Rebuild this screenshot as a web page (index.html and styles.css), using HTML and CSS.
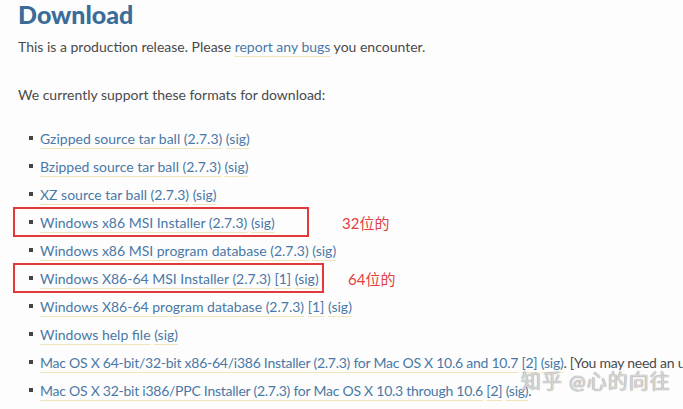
FILE: index.html
```html
<!DOCTYPE html>
<html lang="en">
<head>
    <meta charset="UTF-8">
    <meta name="viewport" content="width=device-width, initial-scale=1.0">
    <title>Download</title>
    <link rel="stylesheet" href="styles.css">
</head>
<body>

    <div class="page">
        <h1>Download</h1>
        <p>This is a production release. Please <a href="#">report any bugs</a> you encounter.</p>
        <p class="intro">We currently support these formats for download:</p>

        <ul class="files">
            <li><span class="dot"></span><a href="#">Gzipped source tar ball (2.7.3)</a>&nbsp;<a href="#">(sig)</a></li>
            <li><span class="dot"></span><a href="#">Bzipped source tar ball (2.7.3)</a>&nbsp;<a href="#">(sig)</a></li>
            <li><span class="dot"></span><a href="#">XZ source tar ball (2.7.3)</a>&nbsp;<a href="#">(sig)</a></li>
            <li class="marked">
                <div class="box box-32"><span class="dot"></span><a href="#">Windows x86 MSI Installer (2.7.3)</a>&nbsp;<a href="#">(sig)</a></div>
                <span class="note note-32">32位的</span>
            </li>
            <li><span class="dot"></span><a href="#">Windows x86 MSI program database (2.7.3)</a>&nbsp;<a href="#">(sig)</a></li>
            <li class="marked">
                <div class="box box-64"><span class="dot"></span><a href="#">Windows X86-64 MSI Installer (2.7.3)</a>&nbsp;<a href="#">[1]</a>&nbsp;<a href="#">(sig)</a></div>
                <span class="note note-64">64位的</span>
            </li>
            <li><span class="dot"></span><a href="#">Windows X86-64 program database (2.7.3)</a>&nbsp;<a href="#">[1]</a>&nbsp;<a href="#">(sig)</a></li>
            <li><span class="dot"></span><a href="#">Windows help file</a>&nbsp;<a href="#">(sig)</a></li>
            <li class="narrow"><span class="dot"></span><a href="#">Mac OS X 64-bit/32-bit x86-64/i386 Installer (2.7.3) for Mac OS X 10.6 and 10.7</a>&nbsp;<a href="#">[2]</a>&nbsp;<a href="#">(sig)</a>. [You may need an updated Tcl/Tk install to run IDLE or use Tkinter, see note 2 for instructions.]</li>
            <li class="narrow"><span class="dot"></span><a href="#">Mac OS X 32-bit i386/PPC Installer (2.7.3) for Mac OS X 10.3 through 10.6</a>&nbsp;<a href="#">[2]</a>&nbsp;<a href="#">(sig)</a>.</li>
        </ul>

        <div class="watermark">知乎 @心的向往</div>
    </div>

</body>
</html>
```

FILE: styles.css
```css
body {
    margin: 0;
    background-color: #fdfdfd;
    font-family: Lato, "Noto Sans CJK SC", sans-serif;
    font-size: 14px;
    color: #4a4a4a;
    overflow: hidden;
}
.page {
    position: relative;
    padding: 0 0 0 18px;
    height: 409px;
}
h1 {
    margin: 0;
    font-family: Lato, sans-serif;
    font-size: 25px;
    font-weight: 900;
    line-height: 28px;
    color: #3a6c9a;
}
p {
    margin: 9px 0 0 0;
    line-height: 20px;
}
.intro {
    margin-top: 28px;
}
a {
    color: #4a78a6;
    text-decoration: underline;
    text-decoration-color: #f1e4ba;
    text-underline-offset: 4px;
}
.files {
    list-style: none;
    margin: 19px 0 0 0;
    padding: 0;
}
.files li {
    display: flex;
    align-items: center;
    height: 28px;
    white-space: nowrap;
}
.dot {
    display: inline-block;
    width: 4px;
    height: 4px;
    background-color: #444;
    margin: 0 7px 0 11px;
    flex-shrink: 0;
}
.box {
    display: flex;
    align-items: center;
    height: 26px;
    margin: 0 0 0 -5px;
    padding-left: 3px;
    border: 2px solid #e2393a;
}
.box-32 {
    width: 289px;
}
.box-64 {
    width: 304px;
}
.note {
    color: #e24040;
    font-size: 15px;
}
.note-32 {
    margin-left: 33px;
}
.note-64 {
    margin-left: 24px;
}
.narrow {
    letter-spacing: -0.25px;
}
.watermark {
    position: absolute;
    left: 521px;
    top: 368px;
    font-size: 20px;
    line-height: 26px;
    letter-spacing: 1px;
    color: rgba(255, 255, 255, 0.6);
    text-shadow: 0 0 1px #999, 0 0 1px #999;
}
```
